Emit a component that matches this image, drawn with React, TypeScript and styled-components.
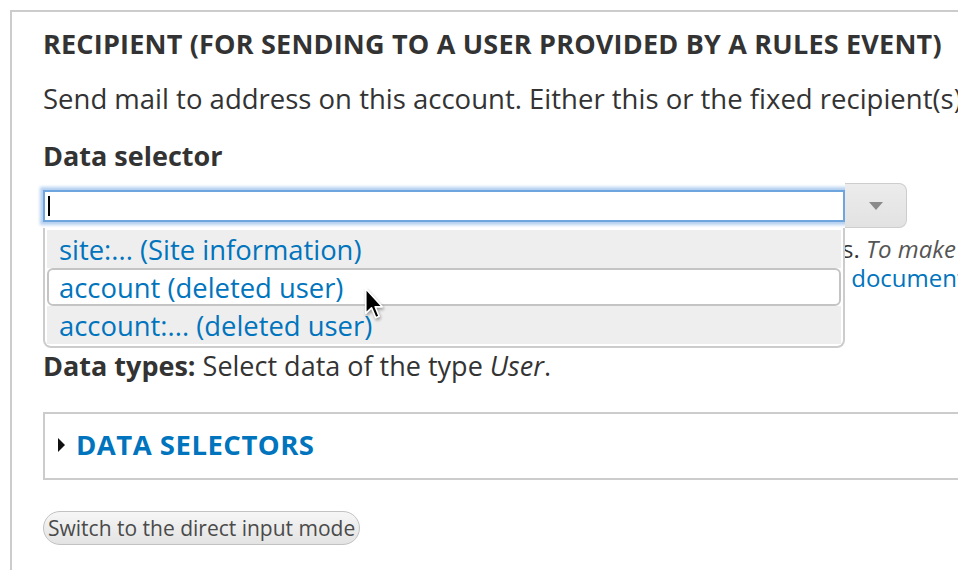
import React from "react"
import styled, { createGlobalStyle } from "styled-components"

const GlobalStyle = createGlobalStyle`
  html, body { margin: 0; padding: 0; background: #fff; overflow: hidden; }
  body { font-family: "Open Sans", "DejaVu Sans", sans-serif; color: #333; }
`

const LINK = "#0074bd"

const suggestions = [
  { label: "site:... (Site information)", hover: false },
  { label: "account (deleted user)", hover: true },
  { label: "account:... (deleted user)", hover: false },
]

export default function App() {
  return (
    <>
      <GlobalStyle />
      <S.Page>
        <S.Fieldset>
          <S.Heading>Recipient (for sending to a user provided by a Rules event)</S.Heading>
          <S.Intro>Send mail to address on this account. Either this or the fixed recipient(s) field must be specified.</S.Intro>
          <S.Label>Data selector</S.Label>
          <S.Autocomplete>
            <S.Input>
              <S.Caret />
            </S.Input>
            <S.DropButton>
              <S.DownArrow />
            </S.DropButton>
            <S.Suggestions>
              {suggestions.map((s) => (
                <S.Suggestion key={s.label} hover={s.hover}>
                  {s.label}
                </S.Suggestion>
              ))}
            </S.Suggestions>
            <S.Pointer viewBox="0 0 12 20" width="20" height="33">
              <path
                d="M1 1 V16 L4.5 12.6 L7 18.6 L9.1 17.7 L6.7 12 H11 Z"
                fill="#000"
                stroke="#fff"
                strokeWidth="1"
                strokeLinejoin="round"
              />
            </S.Pointer>
          </S.Autocomplete>
          <S.Description>
            <S.Line>
              <S.Covered w={799}>The data selector helps you drill down into the data available to Rule</S.Covered>
              s. <em>To make entity fields appear in the data selector, you may have to use the condition</em>
            </S.Line>
            <S.Line>
              <S.Covered w={802}>'entity has field' (or 'content is of type'). More useful tips about data selection is available in the online</S.Covered>{" "}
              <S.Link>documentation</S.Link>.
            </S.Line>
            <S.Line>
              <S.Covered w={400}>&nbsp;</S.Covered>
            </S.Line>
          </S.Description>
          <S.Types>
            <strong>Data types:</strong> Select data of the type <em>User</em>.
          </S.Types>
          <S.Collapsible>
            <S.Legend>
              <S.RightArrow />
              Data selectors
            </S.Legend>
          </S.Collapsible>
          <S.SwitchButton>Switch to the direct input mode</S.SwitchButton>
        </S.Fieldset>
      </S.Page>
    </>
  )
}

const S = {
  Page: styled.div`
    padding: 10px 0 0 10px;
    width: 1300px;
  `,
  Fieldset: styled.div`
    border-top: 2px solid #ccc;
    border-left: 2px solid #ccc;
    padding: 15px 0 60px 31px;
  `,
  Heading: styled.h2`
    margin: 0;
    font-size: 27px;
    font-weight: 700;
    letter-spacing: 0.2px;
    line-height: 34px;
    text-transform: uppercase;
    white-space: nowrap;
    color: #333;
  `,
  Intro: styled.div`
    margin-top: 21px;
    font-size: 27.5px;
    line-height: 34px;
    white-space: nowrap;
  `,
  Label: styled.div`
    margin-top: 23px;
    font-size: 27px;
    font-weight: 700;
    line-height: 34px;
  `,
  Autocomplete: styled.div`
    position: relative;
    margin-top: 10px;
    display: flex;
    align-items: center;
    height: 45px;
  `,
  Input: styled.div`
    box-sizing: border-box;
    width: 802px;
    height: 32px;
    border: 2px solid #6fa5de;
    box-shadow: 0 0 3px 3px #b4d0f0;
    background: #fff;
    padding: 4px 3px;
    display: flex;
    align-items: center;
  `,
  Caret: styled.span`
    display: block;
    width: 2px;
    height: 20px;
    background: #000;
  `,
  DropButton: styled.div`
    box-sizing: border-box;
    width: 62px;
    height: 45px;
    background: linear-gradient(#ececec, #e2e2e2);
    border: 1px solid #cdcdcd;
    border-left: none;
    border-radius: 0 8px 8px 0;
    display: flex;
    align-items: center;
    justify-content: center;
  `,
  DownArrow: styled.span`
    width: 0;
    height: 0;
    border-top: 8px solid #8a8a8a;
    border-left: 7px solid transparent;
    border-right: 7px solid transparent;
  `,
  Suggestions: styled.ul`
    position: absolute;
    top: 100%;
    left: 0;
    z-index: 2;
    box-sizing: border-box;
    width: 802px;
    margin: 0;
    padding: 2px 2px 2px;
    list-style: none;
    background: #fff;
    border: 2px solid #ccc;
    border-top: none;
    border-radius: 0 0 8px 8px;
  `,
  Suggestion: styled.li<{ hover?: boolean }>`
    box-sizing: border-box;
    height: 38px;
    padding: 0 10px;
    display: flex;
    align-items: center;
    font-size: 27.4px;
    color: ${LINK};
    white-space: nowrap;
    background: ${({ hover }) => (hover ? "#fff" : "#eeeeee")};
    border: 2px solid ${({ hover }) => (hover ? "#c4c4c4" : "transparent")};
    border-radius: ${({ hover }) => (hover ? "6px" : "0")};
  `,
  Pointer: styled.svg`
    position: absolute;
    left: 321px;
    top: 104px;
    z-index: 3;
    filter: drop-shadow(1px 2px 1.5px rgba(0, 0, 0, 0.35));
  `,
  Description: styled.div`
    margin-top: 6px;
    font-size: 24px;
    line-height: 29px;
    color: #333;
  `,
  Line: styled.div`
    white-space: nowrap;
    em { color: #555; }
  `,
  Covered: styled.span<{ w: number }>`
    display: inline-block;
    vertical-align: top;
    width: ${({ w }) => w}px;
    overflow: hidden;
    text-align: right;
  `,
  Link: styled.span`
    color: ${LINK};
  `,
  Types: styled.div`
    margin-top: 28px;
    font-size: 27px;
    line-height: 34px;
    white-space: nowrap;
  `,
  Collapsible: styled.div`
    margin-top: 29px;
    border: 2px solid #ccc;
    border-right: none;
    padding: 14px 0 16px 13px;
  `,
  Legend: styled.div`
    display: flex;
    align-items: center;
    gap: 11px;
    font-size: 27.5px;
    font-weight: 700;
    letter-spacing: 0.5px;
    line-height: 34px;
    text-transform: uppercase;
    color: ${LINK};
  `,
  RightArrow: styled.span`
    width: 0;
    height: 0;
    border-left: 7px solid #111;
    border-top: 7px solid transparent;
    border-bottom: 7px solid transparent;
  `,
  SwitchButton: styled.button`
    display: block;
    margin-top: 31px;
    height: 34px;
    padding: 0 4px;
    border: 1px solid #c2c2c2;
    border-radius: 17px;
    background: linear-gradient(#f6f6f6, #e3e3e3);
    font-family: "Open Sans", "DejaVu Sans", sans-serif;
    font-size: 21px;
    color: #4a4a4a;
  `,
}
